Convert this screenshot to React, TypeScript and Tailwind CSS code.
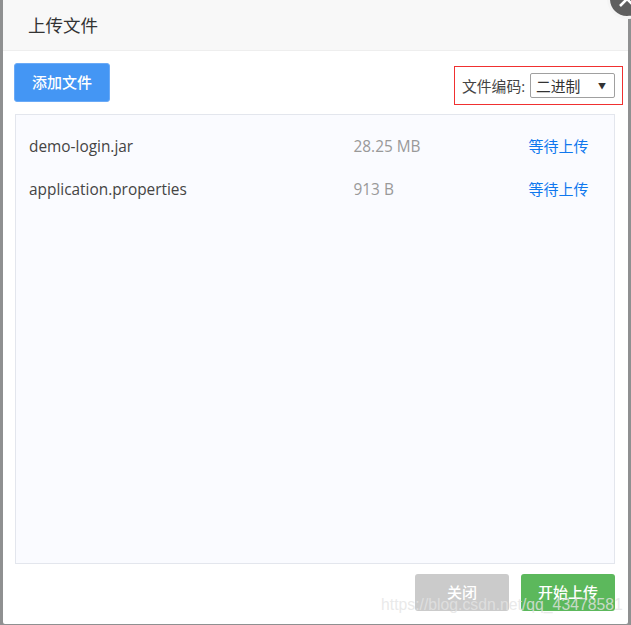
const font = '"Open Sans","Noto Sans CJK SC",sans-serif';

function Row({ name, size }: { name: string; size: string }) {
  return (
    <div className="flex h-[43px] items-center">
      <span className="w-[324.5px] text-[15.4px] text-[#444]">{name}</span>
      <span className="w-[175px] text-[15.4px] text-[#999]">{size}</span>
      <span className="text-[15px] text-[#0f78ee]">等待上传</span>
    </div>
  );
}

export default function App() {
  return (
    <div
      className="relative h-[625px] w-[631px] overflow-hidden bg-[#8f9091] pb-[1px] pl-[3px] pr-[3.5px]"
      style={{ fontFamily: font }}
    >
      <div className="flex h-[624px] flex-col rounded-[2px] bg-white">
        <div className="flex h-[51px] shrink-0 items-center border-b border-[#eeeeee] bg-[#f8f8f8] pl-[25px] text-[17.5px] text-[#333]">
          上传文件
        </div>
        <div className="flex flex-1 flex-col pl-[11px] pr-[12.5px]">
          <div className="flex h-[63px] shrink-0 items-start justify-between">
            <button className="mt-[12px] flex h-[39px] w-[96px] items-center justify-center rounded-[3px] border border-[#6aaaf7] bg-[#4496f4] text-[15px] font-medium text-white">
              添加文件
            </button>
            <div className="mr-[-8px] mt-[15px] flex h-[39px] w-[169px] items-center border border-[#f03030] pl-[7px] text-[14.8px] text-[#444]">
              <span className="w-[68px] pt-[2px]">文件编码:</span>
              <div className="flex h-[25px] w-[85px] items-center justify-between rounded-[2px] border border-[#a0a0a0] bg-white pl-[5px] pr-[8px] pt-[1px] text-[14.8px] text-[#333]">
                <span>二进制</span>
                <span className="text-[8px] leading-none text-[#333]">▼</span>
              </div>
            </div>
          </div>
          <div className="ml-[1px] h-[450px] w-[600px] border border-[#e3e6ed] bg-[#fafbff] pl-[13px] pt-[10px]">
            <Row name="demo-login.jar" size="28.25 MB" />
            <Row name="application.properties" size="913 B" />
          </div>
          <div className="flex justify-end gap-[12px] pt-[10px]">
            <button className="flex h-[37px] w-[94px] items-center justify-center rounded-[3px] bg-[#cbcbcb] text-[15px] font-medium text-white">
              关闭
            </button>
            <button className="flex h-[37px] w-[94px] items-center justify-center rounded-[3px] bg-[#5cb85c] text-[15px] font-medium text-white">
              开始上传
            </button>
          </div>
        </div>
      </div>

      <div className="absolute right-[-16px] top-[-21px] flex h-[40px] w-[40px] items-center justify-center rounded-full border-[3px] border-[#f4f4f4] bg-[#5f5f5f]">
        <svg width="20" height="20" viewBox="0 0 20 20" fill="none" stroke="#ffffff" strokeWidth="2.6">
          <path d="M3 3l14 14M17 3L3 17" />
        </svg>
      </div>

      <div
        className="absolute left-[381px] top-[595px] whitespace-nowrap text-[15.75px] leading-[20px] text-[#e4e4e4]/80"
        style={{ fontFamily: '"Liberation Sans",sans-serif' }}
      >
        https://blog.csdn.net/qq_43478581
      </div>
    </div>
  );
}
